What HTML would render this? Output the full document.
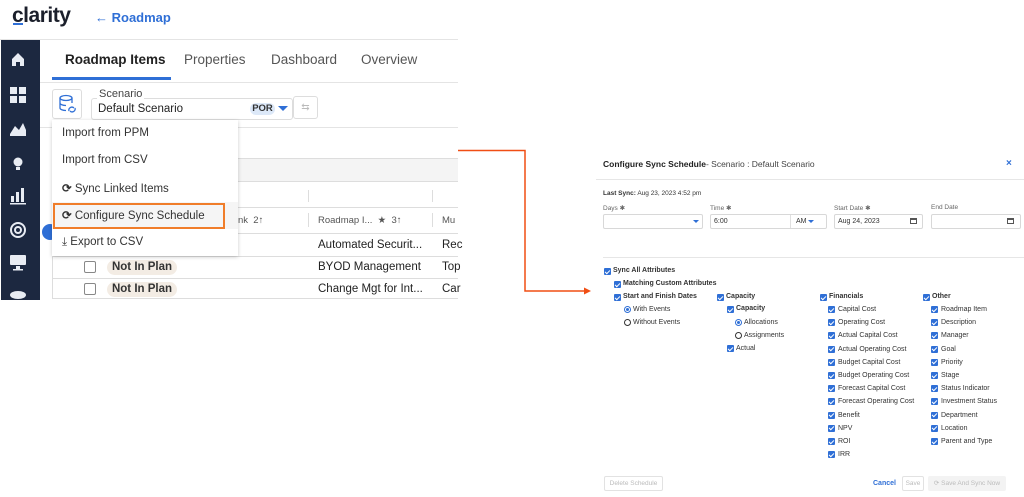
<!DOCTYPE html>
<html><head><meta charset="utf-8">
<style>
*{margin:0;padding:0;box-sizing:border-box}
body{width:1024px;height:497px;background:#fff;position:relative;overflow:hidden;font-family:"Liberation Sans",sans-serif;color:#222}
.a{position:absolute;white-space:nowrap}
.cb{position:absolute;width:7px;height:7px;background:#2f6fd6;border-radius:1px}
.cb:after{content:"";position:absolute;left:2px;top:0.5px;width:2px;height:4px;border:solid #fff;border-width:0 1.2px 1.2px 0;transform:rotate(45deg)}
.dl{position:absolute;font-size:7px;color:#333;white-space:nowrap}
.rd{position:absolute;width:7px;height:7px;border:1px solid #333;border-radius:50%}
.rd.on{border-color:#2f6fd6}
.rd.on:after{content:"";position:absolute;left:1px;top:1px;width:3px;height:3px;border-radius:50%;background:#2f6fd6}
.inp{position:absolute;height:15px;border:1px solid #d8d8d8;border-radius:2px;background:#fff}
.lbl{position:absolute;font-size:6.5px;color:#666}
.tab{position:absolute;top:52px;font-size:13.5px;color:#555;white-space:nowrap}
.mi{position:absolute;left:62px;font-size:11.5px;color:#333;white-space:nowrap}
</style></head><body>
<div class="a" style="left:12px;top:4px;font-size:21px;font-weight:bold;color:#1b1f2b;letter-spacing:-0.5px">clarity</div>
<div class="a" style="left:13px;top:23px;width:10px;height:2px;background:#2f6fd6"></div>
<div class="a" style="left:95px;top:10px;font-size:13px;color:#2f6fd6;font-weight:bold">← Roadmap</div>
<div class="a" style="left:0;top:39px;width:458px;height:1px;background:#e4e4e4"></div>
<div class="a" style="left:1px;top:40px;width:39px;height:260px;background:#1c2840"></div>
<svg class="a" style="left:8px;top:50px" width="26" height="250" fill="#e8ecf3">
<path d="M4 9 L10 3 L16 9 V16 H12 V12 H8 V16 H4Z"/>
<rect x="2" y="37" width="7" height="7"/><rect x="11" y="37" width="7" height="7"/><rect x="2" y="46" width="7" height="7"/><rect x="11" y="46" width="7" height="7"/>
<path d="M2 84 L7 76 L11 80 L15 73 L18 80 V86 H2Z"/>
<circle cx="10" cy="112" r="4.5"/><rect x="8" y="117" width="4" height="3"/>
<rect x="3" y="146" width="3" height="6"/><rect x="8" y="142" width="3" height="10"/><rect x="13" y="138" width="3" height="14"/><rect x="2" y="153" width="16" height="1.5"/>
<circle cx="10" cy="180" r="7" fill="none" stroke="#e8ecf3" stroke-width="2"/><circle cx="10" cy="180" r="3" fill="none" stroke="#e8ecf3" stroke-width="2"/>
<rect x="2" y="205" width="16" height="10" rx="1"/><rect x="8" y="216" width="4" height="3"/><rect x="5" y="219" width="10" height="1.5"/>
<ellipse cx="10" cy="245" rx="8" ry="4"/>
</svg>
<div class="tab" style="left:65px;font-weight:bold;color:#222">Roadmap Items</div>
<div class="tab" style="left:184px">Properties</div>
<div class="tab" style="left:271px">Dashboard</div>
<div class="tab" style="left:361px">Overview</div>
<div class="a" style="left:52px;top:77px;width:119px;height:3px;background:#2f6fd6"></div>
<div class="a" style="left:40px;top:82px;width:418px;height:1px;background:#e4e4e4"></div>
<div class="a" style="left:52px;top:89px;width:30px;height:30px;border:1px solid #ddd;border-radius:3px"></div>
<svg class="a" style="left:57px;top:94px" width="22" height="22" fill="none" stroke="#2f6fd6" stroke-width="1.3"><ellipse cx="9" cy="4" rx="6" ry="2.5"/><path d="M3 4v10c0 1.4 2.7 2.5 6 2.5M15 4v5M3 9c0 1.4 2.7 2.5 6 2.5"/><path d="M12 17a3 3 0 0 1 5-3M18 14a3 3 0 0 1-5 3"/></svg>
<div class="a" style="left:91px;top:98px;width:202px;height:22px;border:1px solid #ddd;border-radius:3px"></div>
<div class="a" style="left:97px;top:88px;font-size:11px;color:#444;background:#fff;padding:0 2px">Scenario</div>
<div class="a" style="left:98px;top:103px;font-size:11.5px;color:#222">Default Scenario</div>
<div class="a" style="left:250px;top:103px;width:25px;height:12px;border-radius:6px;background:#dce8f8;font-size:9.5px;font-weight:bold;color:#333;text-align:center;line-height:12px">POR</div>
<div class="a" style="left:278px;top:106px;border:5px solid transparent;border-top:5px solid #2f6fd6"></div>
<div class="a" style="left:293px;top:96px;width:25px;height:23px;border:1px solid #ddd;border-radius:3px;color:#bbb;font-size:10px;text-align:center;line-height:22px">⇆</div>
<div class="a" style="left:40px;top:127px;width:418px;height:1px;background:#e4e4e4"></div>
<div class="a" style="left:238px;top:158px;width:220px;height:24px;background:#f4f4f4;border-top:1px solid #ddd;border-bottom:1px solid #ddd"></div>
<div class="a" style="left:308px;top:190px;width:1px;height:12px;background:#ddd"></div>
<div class="a" style="left:432px;top:190px;width:1px;height:12px;background:#ddd"></div>
<div class="a" style="left:238px;top:207px;width:220px;height:1px;background:#ddd"></div>
<div class="a" style="left:308px;top:213px;width:1px;height:14px;background:#ddd"></div>
<div class="a" style="left:432px;top:213px;width:1px;height:14px;background:#ddd"></div>
<div class="a" style="left:238px;top:215px;font-size:9.5px;color:#555">nk &nbsp;2↑</div>
<div class="a" style="left:318px;top:215px;font-size:9.5px;color:#555">Roadmap I... &nbsp;★ &nbsp;3↑</div>
<div class="a" style="left:442px;top:215px;font-size:9.5px;color:#555">Mu</div>
<div class="a" style="left:52px;top:233px;width:406px;height:1px;background:#ddd"></div>
<div class="a" style="left:52px;top:256px;width:406px;height:1px;background:#ddd"></div>
<div class="a" style="left:52px;top:278px;width:406px;height:1px;background:#ddd"></div>
<div class="a" style="left:52px;top:298px;width:406px;height:1px;background:#ddd"></div>
<div class="a" style="left:52px;top:233px;width:1px;height:66px;background:#ddd"></div>
<div class="a" style="left:318px;top:239px;font-size:11.5px">Automated Securit...</div>
<div class="a" style="left:442px;top:239px;font-size:11.5px">Rec</div>
<div class="a" style="left:318px;top:261px;font-size:11.5px">BYOD Management</div>
<div class="a" style="left:442px;top:261px;font-size:11.5px">Top</div>
<div class="a" style="left:318px;top:283px;font-size:11.5px">Change Mgt for Int...</div>
<div class="a" style="left:442px;top:283px;font-size:11.5px">Car</div>
<div class="a" style="left:84px;top:261px;width:12px;height:12px;border:1px solid #888;border-radius:2px"></div>
<div class="a" style="left:84px;top:283px;width:12px;height:12px;border:1px solid #888;border-radius:2px"></div>
<div class="a" style="left:107px;top:260px;width:70px;height:15px;border-radius:8px;background:#f3ece4;font-size:11.5px;font-weight:bold;color:#333;text-align:center;line-height:15px">Not In Plan</div>
<div class="a" style="left:107px;top:282px;width:70px;height:15px;border-radius:8px;background:#f3ece4;font-size:11.5px;font-weight:bold;color:#333;text-align:center;line-height:15px">Not In Plan</div>
<div class="a" style="left:42px;top:224px;width:16px;height:16px;border-radius:50%;background:#2f6fd6"></div>
<div class="a" style="left:52px;top:120px;width:186px;height:136px;background:#fff;box-shadow:0 1px 4px rgba(0,0,0,.2)"></div>
<div class="mi" style="top:127px">Import from PPM</div>
<div class="mi" style="top:154px">Import from CSV</div>
<div class="mi" style="top:181px"><span style="font-weight:bold">⟳</span> Sync Linked Items</div>
<div class="a" style="left:52px;top:202px;width:186px;height:27px;background:#f5f5f5"></div>
<div class="a" style="left:53px;top:203px;width:172px;height:26px;border:2px solid #f07d2a"></div>
<div class="mi" style="top:208px"><span style="font-weight:bold">⟳</span> Configure Sync Schedule</div>
<div class="mi" style="top:236px">⤓ Export to CSV</div>
<svg class="a" style="left:0;top:0" width="1024" height="497"><path d="M458 150.5H525V291H586" fill="none" stroke="#f04e14" stroke-width="1.5"/><path d="M584 287.5L591 291L584 294.5Z" fill="#f04e14"/></svg>
<div class="a" style="left:603px;top:159px;font-size:8.5px"><b>Configure Sync Schedule</b><span style="color:#444">- Scenario : Default Scenario</span></div>
<div class="a" style="left:1006px;top:158px;font-size:10px;color:#2f6fd6;font-weight:bold">×</div>
<div class="a" style="left:596px;top:179px;width:428px;height:1px;background:#e6e6e6"></div>
<div class="dl" style="left:603px;top:190px;font-size:6.5px"><b>Last Sync:</b> Aug 23, 2023 4:52 pm</div>
<div class="lbl" style="left:603px;top:204px">Days ✱</div>
<div class="lbl" style="left:710px;top:204px">Time ✱</div>
<div class="lbl" style="left:834px;top:204px">Start Date ✱</div>
<div class="lbl" style="left:931px;top:204px">End Date</div>
<div class="inp" style="left:603px;top:214px;width:100px"></div>
<div class="a" style="left:693px;top:220px;border:3px solid transparent;border-top:3px solid #2f6fd6"></div>
<div class="inp" style="left:710px;top:214px;width:117px"></div>
<div class="dl" style="left:714px;top:218px">6:00</div>
<div class="a" style="left:790px;top:215px;width:1px;height:13px;background:#e0e0e0"></div>
<div class="dl" style="left:796px;top:218px">AM</div>
<div class="a" style="left:808px;top:220px;border:3px solid transparent;border-top:3px solid #2f6fd6"></div>
<div class="inp" style="left:834px;top:214px;width:89px"></div>
<div class="dl" style="left:838px;top:218px">Aug 24, 2023</div>
<div class="a" style="left:910px;top:218px;width:7px;height:6px;border:1px solid #555;border-top-width:2px"></div>
<div class="inp" style="left:931px;top:214px;width:90px"></div>
<div class="a" style="left:1007px;top:218px;width:7px;height:6px;border:1px solid #555;border-top-width:2px"></div>
<div class="a" style="left:603px;top:257px;width:421px;height:1px;background:#e6e6e6"></div>

<div class="cb" style="left:604px;top:268px"></div><div class="dl" style="left:613px;top:267px;font-weight:bold">Sync All Attributes</div>
<div class="cb" style="left:614px;top:281px"></div><div class="dl" style="left:623px;top:280px;font-weight:bold">Matching Custom Attributes</div>
<div class="cb" style="left:614px;top:294px"></div><div class="dl" style="left:623px;top:293px;font-weight:bold">Start and Finish Dates</div>
<div class="rd on" style="left:624px;top:306px"></div><div class="dl" style="left:633px;top:306px">With Events</div>
<div class="rd" style="left:624px;top:319px"></div><div class="dl" style="left:633px;top:319px">Without Events</div>

<div class="cb" style="left:717px;top:294px"></div><div class="dl" style="left:726px;top:293px;font-weight:bold">Capacity</div>
<div class="cb" style="left:727px;top:306px"></div><div class="dl" style="left:736px;top:305px;font-weight:bold">Capacity</div>
<div class="rd on" style="left:735px;top:319px"></div><div class="dl" style="left:744px;top:319px">Allocations</div>
<div class="rd" style="left:735px;top:332px"></div><div class="dl" style="left:744px;top:332px">Assignments</div>
<div class="cb" style="left:727px;top:345px"></div><div class="dl" style="left:736px;top:345px">Actual</div>

<div class="cb" style="left:820px;top:294px"></div><div class="dl" style="left:829px;top:293px;font-weight:bold">Financials</div>
<div class="cb" style="left:923px;top:294px"></div><div class="dl" style="left:932px;top:293px;font-weight:bold">Other</div>

<div style="position:absolute;left:828px;top:306px">
<div class="cb" style="left:0;top:0"></div><div class="dl" style="left:10px;top:0">Capital Cost</div>
<div class="cb" style="left:0;top:13.2px"></div><div class="dl" style="left:10px;top:13.2px">Operating Cost</div>
<div class="cb" style="left:0;top:26.4px"></div><div class="dl" style="left:10px;top:26.4px">Actual Capital Cost</div>
<div class="cb" style="left:0;top:39.6px"></div><div class="dl" style="left:10px;top:39.6px">Actual Operating Cost</div>
<div class="cb" style="left:0;top:52.8px"></div><div class="dl" style="left:10px;top:52.8px">Budget Capital Cost</div>
<div class="cb" style="left:0;top:66px"></div><div class="dl" style="left:10px;top:66px">Budget Operating Cost</div>
<div class="cb" style="left:0;top:79.2px"></div><div class="dl" style="left:10px;top:79.2px">Forecast Capital Cost</div>
<div class="cb" style="left:0;top:92.4px"></div><div class="dl" style="left:10px;top:92.4px">Forecast Operating Cost</div>
<div class="cb" style="left:0;top:105.6px"></div><div class="dl" style="left:10px;top:105.6px">Benefit</div>
<div class="cb" style="left:0;top:118.8px"></div><div class="dl" style="left:10px;top:118.8px">NPV</div>
<div class="cb" style="left:0;top:132px"></div><div class="dl" style="left:10px;top:132px">ROI</div>
<div class="cb" style="left:0;top:145.2px"></div><div class="dl" style="left:10px;top:145.2px">IRR</div>
</div>
<div style="position:absolute;left:931px;top:306px">
<div class="cb" style="left:0;top:0"></div><div class="dl" style="left:10px;top:0">Roadmap Item</div>
<div class="cb" style="left:0;top:13.2px"></div><div class="dl" style="left:10px;top:13.2px">Description</div>
<div class="cb" style="left:0;top:26.4px"></div><div class="dl" style="left:10px;top:26.4px">Manager</div>
<div class="cb" style="left:0;top:39.6px"></div><div class="dl" style="left:10px;top:39.6px">Goal</div>
<div class="cb" style="left:0;top:52.8px"></div><div class="dl" style="left:10px;top:52.8px">Priority</div>
<div class="cb" style="left:0;top:66px"></div><div class="dl" style="left:10px;top:66px">Stage</div>
<div class="cb" style="left:0;top:79.2px"></div><div class="dl" style="left:10px;top:79.2px">Status Indicator</div>
<div class="cb" style="left:0;top:92.4px"></div><div class="dl" style="left:10px;top:92.4px">Investment Status</div>
<div class="cb" style="left:0;top:105.6px"></div><div class="dl" style="left:10px;top:105.6px">Department</div>
<div class="cb" style="left:0;top:118.8px"></div><div class="dl" style="left:10px;top:118.8px">Location</div>
<div class="cb" style="left:0;top:132px"></div><div class="dl" style="left:10px;top:132px">Parent and Type</div>
</div>

<div class="a" style="left:604px;top:476px;width:59px;height:15px;border:1px solid #e2e2e2;border-radius:2px;font-size:6.5px;color:#bbb;text-align:center;line-height:13px">Delete Schedule</div>
<div class="a" style="left:873px;top:480px;font-size:7px;color:#2f6fd6;font-weight:bold">Cancel</div>
<div class="a" style="left:902px;top:476px;width:22px;height:15px;border:1px solid #e2e2e2;border-radius:2px;font-size:6.5px;color:#bbb;text-align:center;line-height:13px">Save</div>
<div class="a" style="left:928px;top:476px;width:78px;height:15px;background:#f3f3f3;border-radius:2px;font-size:6.5px;color:#bbb;text-align:center;line-height:15px">⟳ Save And Sync Now</div>
</body></html>
